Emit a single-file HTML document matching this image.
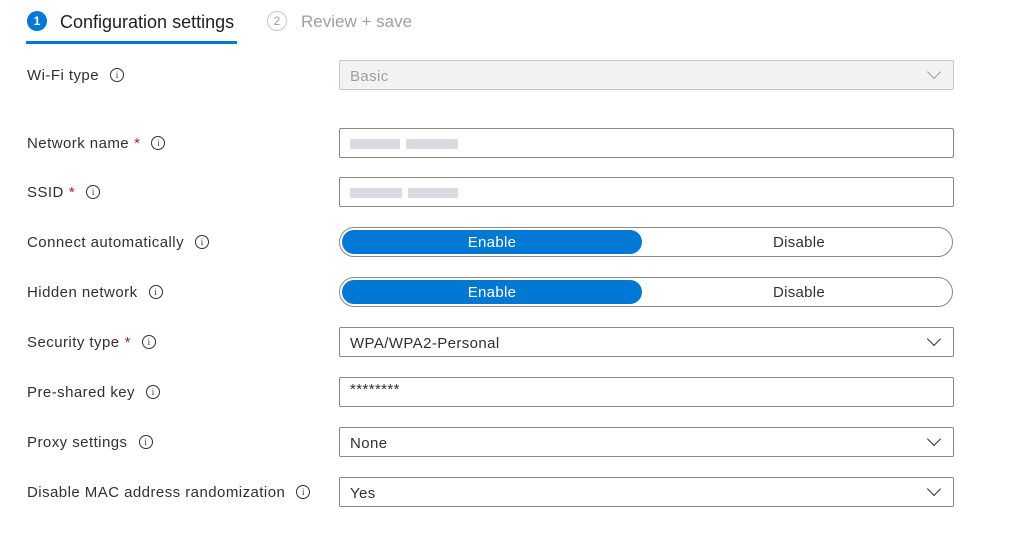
<!DOCTYPE html>
<html><head><style>
body{margin:0;width:1020px;height:534px;background:#fff;font-family:"Liberation Sans",sans-serif;color:#323130;position:relative;overflow:hidden}
.a{position:absolute}
.lbl{position:absolute;left:27px;font-size:15px;letter-spacing:0.45px;height:20px;white-space:nowrap;display:flex;align-items:center}
.lbl .s{color:#a4262c;margin-left:5px}
.i{display:inline-block;width:12px;height:12px;border:1px solid #323130;border-radius:50%;font-size:9px;line-height:12px;text-align:center;margin-left:11px;letter-spacing:0;font-family:"Liberation Serif",serif}
.box{position:absolute;left:339px;height:28px;border:1px solid #8a8886;border-radius:2px;font-size:15px;letter-spacing:0.4px;line-height:32px;padding-left:10px;width:603px}
.chev{position:absolute;right:14px;top:6px;width:9px;height:9px;border-right:1.3px solid #323130;border-bottom:1.3px solid #323130;transform:rotate(45deg)}
.tg{position:absolute;left:339px;width:612px;height:28px;border:1px solid #8a8886;border-radius:15px;font-size:15px;letter-spacing:0.3px}
.tg .on{position:absolute;left:2px;top:2px;width:300px;height:24px;background:#0078d4;border-radius:12px;color:#fff;text-align:center;line-height:26px}
.tg .off{position:absolute;left:306px;right:0;top:2px;text-align:center;line-height:26px}
.bl{position:absolute;height:10px;background:#c8ccd4;opacity:.7}
</style></head><body>
<div class="a" style="left:27px;top:11px;width:20px;height:20px;border-radius:50%;background:#0078d4;color:#fff;font-size:12px;font-weight:bold;text-align:center;line-height:20px">1</div>
<div class="a" style="left:60px;top:11px;font-size:18px;line-height:22px;color:#201f1e">Configuration settings</div>
<div class="a" style="left:26px;top:41px;width:211px;height:3px;background:#0078d4"></div>
<div class="a" style="left:267px;top:11px;width:20px;height:20px;border-radius:50%;border:1px solid #c8c6c4;box-sizing:border-box;color:#a19f9d;font-size:12px;text-align:center;line-height:18px">2</div>
<div class="a" style="left:301px;top:11px;font-size:17px;line-height:22px;color:#a19f9d">Review + save</div>

<div class="lbl" style="top:65px">Wi-Fi type<span class="i">i</span></div>
<div class="box" style="top:60px;background:#f3f2f1;border-color:#c8c6c4;color:#a19f9d">Basic<div class="chev" style="border-color:#a19f9d"></div></div>

<div class="lbl" style="top:133px">Network name<span class="s">*</span><span class="i">i</span></div>
<div class="box" style="top:128px"><div class="bl" style="left:10px;top:10px;width:50px"></div><div class="bl" style="left:66px;top:10px;width:52px"></div></div>

<div class="lbl" style="top:182px">SSID<span class="s">*</span><span class="i">i</span></div>
<div class="box" style="top:177px"><div class="bl" style="left:10px;top:10px;width:52px"></div><div class="bl" style="left:68px;top:10px;width:50px"></div></div>

<div class="lbl" style="top:232px">Connect automatically<span class="i">i</span></div>
<div class="tg" style="top:227px"><div class="on">Enable</div><div class="off">Disable</div></div>

<div class="lbl" style="top:282px">Hidden network<span class="i">i</span></div>
<div class="tg" style="top:277px"><div class="on">Enable</div><div class="off">Disable</div></div>

<div class="lbl" style="top:332px">Security type<span class="s">*</span><span class="i">i</span></div>
<div class="box" style="top:327px">WPA/WPA2-Personal<div class="chev"></div></div>

<div class="lbl" style="top:382px">Pre-shared key<span class="i">i</span></div>
<div class="box" style="top:377px;line-height:24px">********</div>

<div class="lbl" style="top:432px">Proxy settings<span class="i">i</span></div>
<div class="box" style="top:427px">None<div class="chev"></div></div>

<div class="lbl" style="top:482px">Disable MAC address randomization<span class="i">i</span></div>
<div class="box" style="top:477px">Yes<div class="chev"></div></div>
</body></html>
